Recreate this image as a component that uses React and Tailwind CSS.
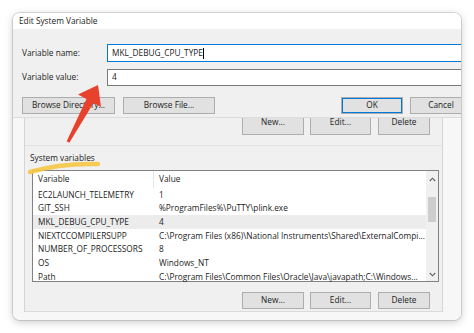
export default function App() {
  const rows = [
    ["EC2LAUNCH_TELEMETRY", "1"],
    ["GIT_SSH", "%ProgramFiles%\\PuTTY\\plink.exe"],
    ["MKL_DEBUG_CPU_TYPE", "4"],
    ["NIEXTCCOMPILERSUPP", "C:\\Program Files (x86)\\National Instruments\\Shared\\ExternalCompi..."],
    ["NUMBER_OF_PROCESSORS", "8"],
    ["OS", "Windows_NT"],
    ["Path", "C:\\Program Files\\Common Files\\Oracle\\Java\\javapath;C:\\Windows..."],
  ];
  const btn =
    "shrink-0 flex items-center justify-center bg-[#e1e1e1] border border-[#adadad] whitespace-nowrap overflow-hidden";
  return (
    <div className="relative w-[474px] h-[333px] bg-white overflow-hidden pt-[13px] pl-[13px] text-[#1b1b1b] text-[8.3px] leading-none font-['Open_Sans',sans-serif]">
      <div className="w-[448px] h-[307px] rounded-[7px] overflow-hidden flex flex-col bg-[#f6f6f6] shadow-[0_0_0_1px_rgba(0,0,0,0.12),0_2px_8px_rgba(0,0,0,0.22)]">
        {/* Edit System Variable dialog */}
        <div className="relative z-10 flex flex-col bg-[#f0f0f0] border-b border-[#dcdcdc]">
          <div className="h-[16px] bg-white pl-[6px] flex items-center">Edit System Variable</div>
          <div className="pl-[9px] pt-[15px] pb-[3px] flex flex-col">
            <div className="flex items-center h-[18px]">
              <div className="w-[85px] shrink-0">Variable name:</div>
              <div className="w-[360px] h-[18px] shrink-0 bg-white border border-[#0078d7] flex items-center pl-[4px]">
                MKL_DEBUG_CPU_TYPE
                <span className="w-px h-[11px] bg-black" />
              </div>
            </div>
            <div className="flex items-center h-[17px] mt-[7px]">
              <div className="w-[85px] shrink-0">Variable value:</div>
              <div className="w-[360px] h-[17px] shrink-0 bg-white border border-[#7a7a7a] flex items-center pl-[4px]">
                4
              </div>
            </div>
            <div className="flex mt-[11px] h-[17px]">
              <div className={btn + " w-[93px]"}>Browse Directory...</div>
              <div className={btn + " w-[92px] ml-[8px]"}>Browse File...</div>
              <div className={btn + " w-[62px] ml-[126px] border-[#0078d7] shadow-[inset_0_0_0_1px_#0078d7]"}>OK</div>
              <div className={btn + " w-[62px] ml-[7px]"}>Cancel</div>
            </div>
          </div>
        </div>

        {/* Environment Variables window behind */}
        <div className="-mt-[8px] flex-1 flex flex-col">
          <div className="flex flex-1">
            <div className="w-[12px] bg-[#f7f7f7] border-r border-[#d5d5d5]" />
            <div className="flex-1 bg-[#f0f0f0] flex flex-col border-b border-[#dadada]">
              <div className="flex h-[25px] ml-[217px]">
                <div className={btn + " w-[62px] h-[25px]"}>New...</div>
                <div className={btn + " w-[61px] h-[25px] ml-[6px]"}>Edit...</div>
                <div className={btn + " w-[52px] h-[25px] ml-[7px]"}>Delete</div>
              </div>
              <div className="mt-[10px] h-[25px] border-t border-[#e2e2e2] flex items-center pl-[5px]">
                System variables
              </div>
              <div className="ml-[7px] w-[407px] h-[112px] bg-white border border-[#828282] flex">
                <div className="flex-1 flex flex-col">
                  <div className="h-[17px] flex items-center shrink-0">
                    <div className="w-[121px] pl-[5px] h-full flex items-center border-r border-[#e5e5e5]">Variable</div>
                    <div className="pl-[5px]">Value</div>
                  </div>
                  {rows.map(([k, v], i) => (
                    <div
                      key={k}
                      className={
                        "h-[13.7px] flex items-center shrink-0 whitespace-nowrap " +
                        (i === 2 ? "bg-[#ececec]" : "")
                      }
                    >
                      <div className="w-[121px] pl-[5px] shrink-0">{k}</div>
                      <div className="pl-[5px]">{v}</div>
                    </div>
                  ))}
                </div>
                <div className="w-[12px] shrink-0 bg-[#f0f0f0] flex flex-col items-center">
                  <div className="h-[17px] flex items-center justify-center">
                    <svg width="7" height="5" viewBox="0 0 7 5">
                      <path d="M0.8 4 L3.5 1.2 L6.2 4" fill="none" stroke="#606060" strokeWidth="1.1" />
                    </svg>
                  </div>
                  <div className="mt-[9px] w-[8px] h-[25px] bg-[#cdcdcd]" />
                  <div className="flex-1" />
                  <div className="h-[14px] flex items-center justify-center">
                    <svg width="7" height="5" viewBox="0 0 7 5">
                      <path d="M0.8 1 L3.5 3.8 L6.2 1" fill="none" stroke="#606060" strokeWidth="1.1" />
                    </svg>
                  </div>
                </div>
              </div>
              <div className="flex h-[17px] ml-[217px] mt-[10px]">
                <div className={btn + " w-[62px]"}>New...</div>
                <div className={btn + " w-[61px] ml-[6px]"}>Edit...</div>
                <div className={btn + " w-[52px] ml-[7px]"}>Delete</div>
              </div>
            </div>
            <div className="w-[19px] bg-[#f7f7f7] border-l border-[#d5d5d5]" />
          </div>
          <div className="h-[8px] bg-[#f7f7f7]" />
        </div>
      </div>

      {/* annotations overlay */}
      <svg className="absolute inset-0 pointer-events-none z-20" width="474" height="333" viewBox="0 0 474 333">
        <path d="M30 172 Q 60 163 98 164" fill="none" stroke="#f6c744" strokeWidth="4.5" strokeLinecap="round" opacity="0.9" />
        <polygon
          points="98,85 101,107 93.5,102.9 69.3,142.7 66.7,141.3 86.5,99.1 78,94.6"
          fill="#e8412c"
        />
      </svg>
    </div>
  );
}
